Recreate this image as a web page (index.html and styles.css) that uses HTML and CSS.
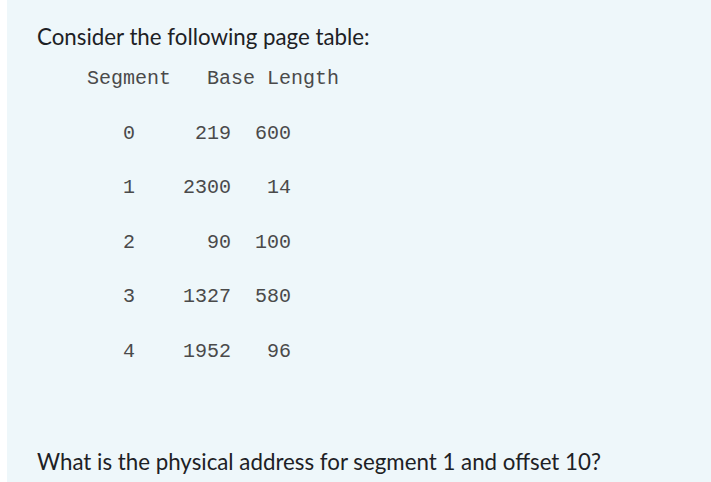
FILE: index.html
```html
<!DOCTYPE html>
<html>
<head>
<meta charset="utf-8">
<link rel="stylesheet" href="styles.css">
</head>
<body>
<div class="formulation">
  <p class="lead">Consider the following page table:</p>
<pre class="table">Segment   Base Length

   0     219  600

   1    2300   14

   2      90  100

   3    1327  580

   4    1952   96</pre>
  <p class="question">What is the physical address for segment 1 and offset 10?</p>
</div>
</body>
</html>
```

FILE: styles.css
```css
html, body {
  margin: 0;
  padding: 0;
  background: #ffffff;
  height: 100%;
}
body {
  padding-left: 7px;
  box-sizing: border-box;
}
.formulation {
  background: #eef7fa;
  height: 100%;
  box-sizing: border-box;
  padding: 24px 0 0 30px;
  color: #1d2125;
  font-family: Lato, "Liberation Sans", sans-serif;
}
.lead {
  margin: 0;
  font-size: 22.3px;
  line-height: 26px;
}
.table {
  margin: 15px 0 0 50px;
  font-family: "Liberation Mono", monospace;
  font-size: 20px;
  line-height: 27.25px;
  color: #4a4a4a;
}
.question {
  margin: 84px 0 0 0;
  font-size: 22.3px;
  line-height: 26px;
}
```
